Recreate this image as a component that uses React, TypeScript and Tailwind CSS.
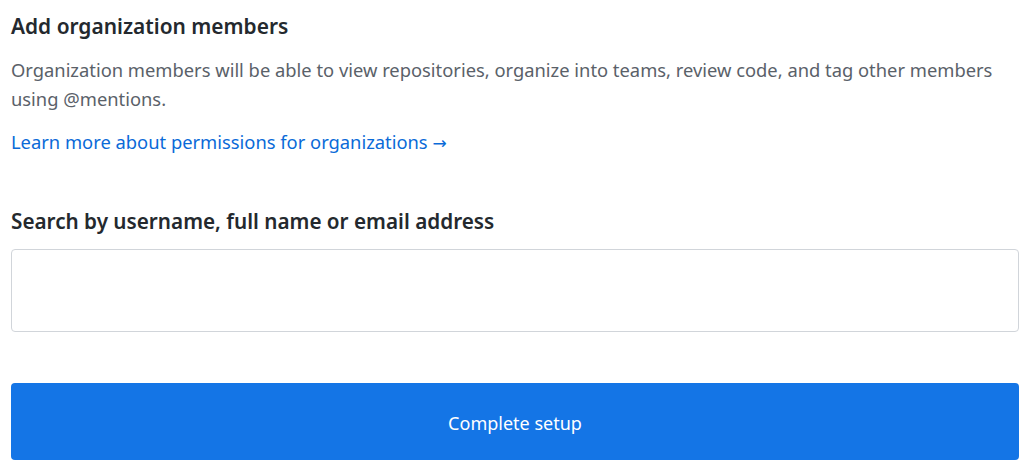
export default function App() {
  return (
    <div
      className="min-h-screen bg-white pl-[11px] pr-[9px] pt-[11px] text-[#24292e]"
      style={{ fontFamily: '"Noto Sans", "Open Sans", sans-serif' }}
    >
      <h2 className="text-[20.9px] font-semibold leading-[30px]">Add organization members</h2>
      <p className="mt-[14px] text-[18.35px] leading-[29px] text-[#5a6169]">
        Organization members will be able to view repositories, organize into teams, review code, and tag other members
        using @mentions.
      </p>
      <a href="#" className="mt-[14px] block h-[29px] text-[18.35px] leading-[29px] text-[#0a6ad8]">
        Learn more about permissions for organizations{" "}
        <span style={{ fontFamily: '"DejaVu Sans", sans-serif' }} className="text-[17px] leading-none">→</span>
      </a>

      <label className="mt-[50px] block text-[20.7px] font-semibold leading-[30px]">
        Search by username, full name or email address
      </label>
      <input
        type="text"
        className="mt-[13px] block h-[83px] w-full rounded-[4px] border border-[#d1d5da] bg-white px-3 text-[18px] outline-none"
      />

      <button className="mt-[51px] h-[77px] w-full rounded-[4px] bg-[#1475e6] pt-[3px] text-[18px] text-white">
        Complete setup
      </button>
    </div>
  )
}
